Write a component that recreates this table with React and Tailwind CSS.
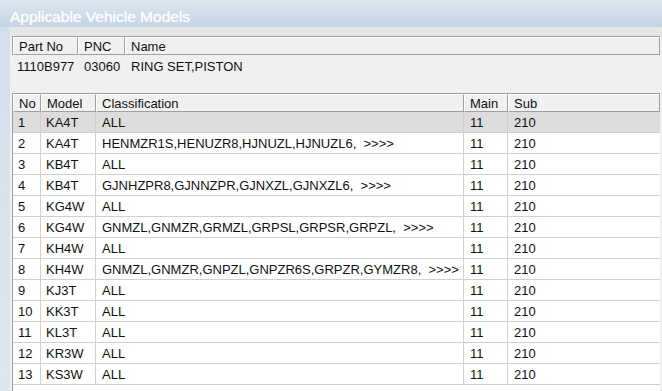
import React from "react";

const rows = [
  ["1", "KA4T", "ALL"],
  ["2", "KA4T", "HENMZR1S,HENUZR8,HJNUZL,HJNUZL6,  >>>>"],
  ["3", "KB4T", "ALL"],
  ["4", "KB4T", "GJNHZPR8,GJNNZPR,GJNXZL,GJNXZL6,  >>>>"],
  ["5", "KG4W", "ALL"],
  ["6", "KG4W", "GNMZL,GNMZR,GRMZL,GRPSL,GRPSR,GRPZL,  >>>>"],
  ["7", "KH4W", "ALL"],
  ["8", "KH4W", "GNMZL,GNMZR,GNPZL,GNPZR6S,GRPZR,GYMZR8,  >>>>"],
  ["9", "KJ3T", "ALL"],
  ["10", "KK3T", "ALL"],
  ["11", "KL3T", "ALL"],
  ["12", "KR3W", "ALL"],
  ["13", "KS3W", "ALL"],
];

const font = { fontFamily: '"Liberation Sans", Arial, sans-serif' };

function HeadCell({ children, last }) {
  return (
    <div
      className={`h-full flex items-center pl-[5px] bg-[#f0f0f0] border-t border-t-white border-l border-l-white border-b border-b-[#a0a0a0] ${last ? "" : "border-r border-r-[#a0a0a0]"}`}
    >
      {children}
    </div>
  );
}

export default function App() {
  return (
    <div
      className="w-[662px] h-[391px] overflow-hidden flex flex-col bg-[#cfdce9] text-[13px] text-[#111] leading-none"
      style={font}
    >
      <div className="h-[27px] shrink-0 flex items-end pl-[10px] pb-[3px] bg-gradient-to-b from-[#dce6f0] to-[#c4d4e3]">
        <span className="text-[15.5px] text-white [text-shadow:0_0_1px_rgba(255,255,255,0.8)]">
          Applicable Vehicle Models
        </span>
      </div>
      <div className="flex flex-1 min-h-0">
        <div className="w-[10px] shrink-0 bg-gradient-to-b from-[#d3dfeb] to-[#dde7f0]" />
        <div className="flex-1 flex flex-col bg-[#f0f0f0] border-t-[9px] border-t-[#e6e6e6] pl-[2px] pr-[2px]">
          {/* Upper part list */}
          <div className="h-[19px] shrink-0 grid grid-cols-[65px_47px_1fr] border border-[#a0a0a0] border-b-0">
            <HeadCell>Part No</HeadCell>
            <HeadCell>PNC</HeadCell>
            <HeadCell last>Name</HeadCell>
          </div>
          <div className="h-[38px] shrink-0 grid grid-cols-[65px_47px_1fr] pt-[5px]">
            <div className="pl-[5px]">1110B977</div>
            <div className="pl-[7px]">03060</div>
            <div className="pl-[7px]">RING SET,PISTON</div>
          </div>
          {/* Lower table */}
          <div className="flex-1 flex flex-col bg-white border-l border-[#a0a0a0]">
            <div className="h-[19px] shrink-0 grid grid-cols-[28px_55px_368px_44px_1fr] border-t border-r border-[#a0a0a0]">
              <HeadCell>No</HeadCell>
              <HeadCell>Model</HeadCell>
              <HeadCell>Classification</HeadCell>
              <HeadCell>Main</HeadCell>
              <HeadCell last>Sub</HeadCell>
            </div>
            {rows.map((r, i) => (
              <div
                key={i}
                className={`h-[21px] shrink-0 grid grid-cols-[28px_55px_368px_44px_1fr] border-b border-[#d0d0d0] ${i === 0 ? "bg-[#dcdcdc]" : "bg-white"}`}
              >
                <div className="flex items-center pl-[5px] border-r border-[#d0d0d0]">{r[0]}</div>
                <div className="flex items-center pl-[5px] border-r border-[#d0d0d0]">{r[1]}</div>
                <div className="flex items-center pl-[6px] border-r border-[#d0d0d0] whitespace-pre">{r[2]}</div>
                <div className="flex items-center pl-[6px] border-r border-[#d0d0d0]">11</div>
                <div className="flex items-center pl-[6px]">210</div>
              </div>
            ))}
          </div>
        </div>
      </div>
    </div>
  );
}
